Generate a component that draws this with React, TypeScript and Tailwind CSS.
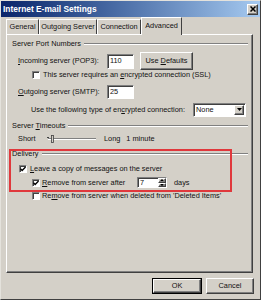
import React from "react";

const sunken =
  "border border-t-[#808080] border-l-[#808080] border-r-white border-b-white shadow-[inset_1px_1px_0_#404040] bg-white";
const raised =
  "border border-t-white border-l-white border-r-[#404040] border-b-[#404040] shadow-[inset_-1px_-1px_0_#808080] bg-[#d4d0c8]";

function U({ children }: { children: React.ReactNode }) {
  return <span className="underline underline-offset-[1px]">{children}</span>;
}

function Check({ checked }: { checked?: boolean }) {
  return (
    <div className={`w-[8px] h-[8px] shrink-0 ${sunken} flex items-center justify-center`}>
      {checked && (
        <svg width="6" height="6" viewBox="0 0 7 7">
          <path d="M0.5 3.2 L2.5 5.2 L6.5 1.2" stroke="#000" strokeWidth="1.6" fill="none" />
        </svg>
      )}
    </div>
  );
}

function Group({ children, mt }: { children: React.ReactNode; mt: string }) {
  return (
    <div className={`${mt} h-[10px] pl-[5px] pr-[4px] flex items-center`}>
      <span className="whitespace-nowrap">{children}</span>
      <div className="flex-1 ml-[3px] h-[2px] border-t border-t-[#808080] border-b border-b-white" />
    </div>
  );
}

export default function App() {
  return (
    <div className="relative w-[261px] h-[300px] bg-[#d4d0c8] border border-t-[#e4e2dc] border-l-[#e4e2dc] border-r-[#404040] border-b-[#404040] flex flex-col text-[#111] text-[7.35px] leading-none font-['Liberation_Sans',Arial,sans-serif]">
      {/* title bar */}
      <div className="h-[16px] flex items-center justify-between bg-linear-to-r from-[#0a246a] to-[#a6caf0] pl-[2px] pr-[2px]">
        <span className="text-white font-bold text-[8.4px]">Internet E-mail Settings</span>
        <div className={`w-[11px] h-[11px] ${raised} flex items-center justify-center`}>
          <svg width="6" height="6" viewBox="0 0 6 6">
            <path d="M0.5 0.5 L5.5 5.5 M5.5 0.5 L0.5 5.5" stroke="#000" strokeWidth="1.5" />
          </svg>
        </div>
      </div>

      {/* tabs */}
      <div className="h-[17px] flex items-end pl-[5px]">
        {[
          ["General", "w-[33px]"],
          ["Outgoing Server", "w-[58px]"],
          ["Connection", "w-[44px]"],
        ].map(([t, w]) => (
          <div
            key={t}
            className={`${w} h-[15px] flex items-center justify-center border-t border-l border-t-white border-l-white border-r border-r-[#404040] whitespace-nowrap`}
          >
            {t}
          </div>
        ))}
        <div className="relative z-10 -mb-px w-[41px] h-[18px] pb-[2px] flex items-center justify-center border-t border-l border-t-white border-l-white border-r border-r-[#404040] bg-[#d4d0c8]">
          Advanced
        </div>
      </div>

      {/* panel */}
      <div className={`ml-[5px] w-[247px] h-[239px] flex flex-col ${raised}`}>
        <Group mt="mt-[4px]">Server Port Numbers</Group>

        <div className="mt-[4px] h-[16px] pl-[11px] flex items-center">
          <span className="w-[89px] whitespace-nowrap">
            <U>I</U>ncoming server (POP3):
          </span>
          <div className={`w-[27px] h-[15px] ${sunken} flex items-center pl-[2px]`}>110</div>
          <div className={`ml-[6px] w-[53px] h-[18px] ${raised} flex items-center justify-center`}>
            <span className="whitespace-nowrap">
              Use <U>D</U>efaults
            </span>
          </div>
        </div>

        <div className="h-[11px] pl-[25px] flex items-center">
          <Check />
          <span className="ml-[3px] whitespace-nowrap">
            This server requires an <U>e</U>ncrypted connection (SSL)
          </span>
        </div>

        <div className="mt-[4px] h-[15px] pl-[11px] flex items-center">
          <span className="w-[89px] whitespace-nowrap">
            <U>O</U>utgoing server (SMTP):
          </span>
          <div className={`w-[27px] h-[14px] ${sunken} flex items-center pl-[2px]`}>25</div>
        </div>

        <div className="mt-[3px] h-[15px] pl-[24px] flex items-center">
          <span className="w-[162px] whitespace-nowrap">
            Use the following type of en<U>c</U>rypted connection:
          </span>
          <div className={`w-[53px] h-[14px] ${sunken} flex items-center justify-between pl-[2px] pr-[1px]`}>
            <span>None</span>
            <div className={`w-[10px] h-[10px] ${raised} flex items-center justify-center`}>
              <svg width="5" height="3" viewBox="0 0 5 3">
                <path d="M0 0 H5 L2.5 3 Z" fill="#000" />
              </svg>
            </div>
          </div>
        </div>

        <Group mt="mt-[4px]">
          Server <U>T</U>imeouts
        </Group>

        <div className="mt-[2px] h-[12px] pl-[11px] flex items-center">
          <span className="w-[29px]">Short</span>
          <svg width="50" height="12" viewBox="0 0 50 12" className="shrink-0">
            <line x1="0" y1="4.5" x2="2" y2="4.5" stroke="#404040" strokeWidth="1" />
            <rect x="1" y="5" width="48" height="1" fill="#808080" />
            <rect x="1" y="6" width="48" height="1" fill="#ffffff" />
            <rect x="4.5" y="2.5" width="2" height="7" fill="#d4d0c8" stroke="#404040" strokeWidth="0.8" />
          </svg>
          <span className="ml-[7px]">Long</span>
          <span className="ml-[6px]">1 minute</span>
        </div>

        <Group mt="mt-[4px]">Delivery</Group>

        <div className="mt-[4px] h-[11px] pl-[12px] flex items-center">
          <Check checked />
          <span className="ml-[3px] whitespace-nowrap">
            <U>L</U>eave a copy of messages on the server
          </span>
        </div>

        <div className="mt-[2px] h-[13px] pl-[25px] flex items-center">
          <Check checked />
          <span className="ml-[2px] w-[95px] whitespace-nowrap">
            <U>R</U>emove from server after
          </span>
          <div className={`w-[30px] h-[11px] ${sunken} flex items-center justify-between pl-[2px]`}>
            <span>7</span>
            <div className="w-[8px] h-full flex flex-col">
              <div className={`flex-1 ${raised} flex items-center justify-center`}>
                <svg width="4" height="2" viewBox="0 0 4 2">
                  <path d="M0 2 H4 L2 0 Z" fill="#000" />
                </svg>
              </div>
              <div className={`flex-1 ${raised} flex items-center justify-center`}>
                <svg width="4" height="2" viewBox="0 0 4 2">
                  <path d="M0 0 H4 L2 2 Z" fill="#000" />
                </svg>
              </div>
            </div>
          </div>
          <span className="ml-[7px]">days</span>
        </div>

        <div className="mt-[1px] h-[11px] pl-[25px] flex items-center">
          <Check />
          <span className="ml-[2px] whitespace-nowrap">
            Re<U>m</U>ove from server when deleted from 'Deleted Items'
          </span>
        </div>
      </div>

      {/* buttons */}
      <div className="mt-[5px] pr-[6px] flex justify-end gap-[4px]">
        <div className="w-[50px] h-[16px] border border-black">
          <div className={`w-full h-full ${raised} flex items-center justify-center`}>OK</div>
        </div>
        <div className={`w-[48px] h-[16px] ${raised} flex items-center justify-center`}>Cancel</div>
      </div>

      {/* red annotation box */}
      <div className="absolute left-[8px] top-[148px] w-[223px] h-[43px] border-2 border-[#e0383c] pointer-events-none" />
    </div>
  );
}
